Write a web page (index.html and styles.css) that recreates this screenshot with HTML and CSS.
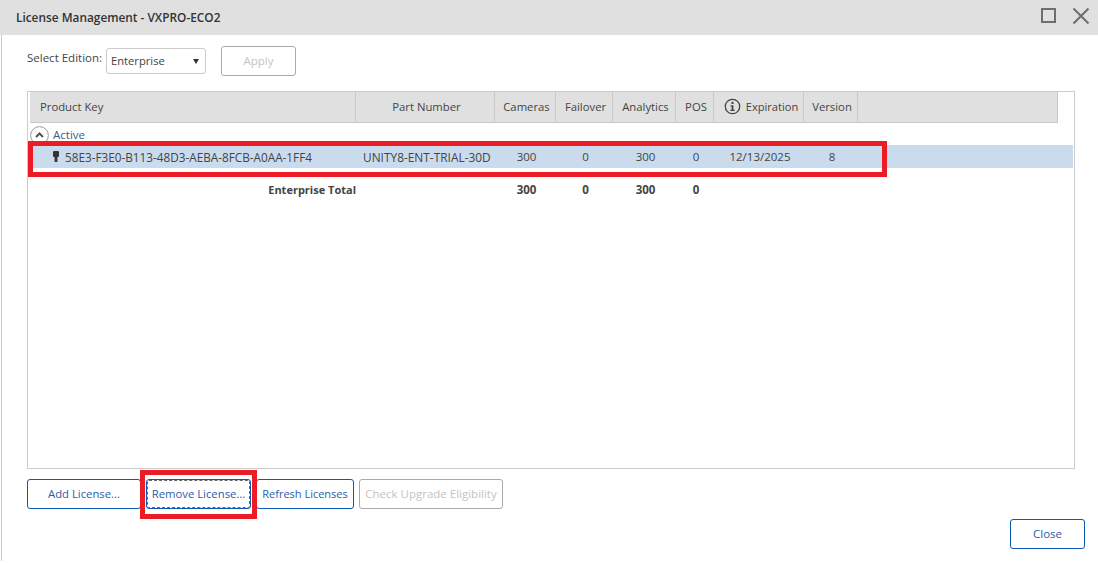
FILE: index.html
```html
<!DOCTYPE html>
<html lang="en">
<head>
    <meta charset="UTF-8">
    <title>License Management</title>
    <link rel="stylesheet" href="styles.css">
</head>
<body>
    <div class="window">
        <!-- Title Bar -->
        <div class="title-bar">
            <div class="title">License Management - VXPRO-ECO2</div>
            <div class="window-controls">
                <svg width="16" height="16" viewBox="0 0 16 16"><rect x="1" y="1" width="13" height="13" fill="none" stroke="#6e6e6e" stroke-width="2"/></svg>
                <svg width="18" height="18" viewBox="0 0 18 18"><path d="M1.5 1.5 L16.5 16.5 M16.5 1.5 L1.5 16.5" fill="none" stroke="#6e6e6e" stroke-width="2"/></svg>
            </div>
        </div>

        <!-- Edition Row -->
        <div class="edition-row">
            <span class="edition-label">Select Edition:</span>
            <div class="select-box">
                <span class="select-value">Enterprise</span>
                <span class="select-arrow"></span>
            </div>
            <button class="btn btn-disabled btn-apply">Apply</button>
        </div>

        <!-- License Grid -->
        <div class="grid-box">
            <div class="grid-header">
                <div class="head-cell head-left">Product Key</div>
                <div class="head-cell">Part Number</div>
                <div class="head-cell">Cameras</div>
                <div class="head-cell">Failover</div>
                <div class="head-cell">Analytics</div>
                <div class="head-cell">POS</div>
                <div class="head-cell head-info">
                    <svg width="17" height="17" viewBox="0 0 17 17">
                        <circle cx="8.5" cy="8.5" r="7.2" fill="none" stroke="#444" stroke-width="1.3"/>
                        <circle cx="8.5" cy="4.9" r="1.2" fill="#444"/>
                        <path d="M6.6 7.3 H9.4 V11.8 H10.6 V13 H6.4 V11.8 H7.6 V8.5 H6.6 Z" fill="#444"/>
                    </svg>
                    Expiration
                </div>
                <div class="head-cell">Version</div>
                <div class="head-fill"></div>
            </div>

            <div class="group-row">
                <svg width="19" height="19" viewBox="0 0 19 19">
                    <circle cx="9.5" cy="9.5" r="8.9" fill="#fff" stroke="#9a9a9a" stroke-width="1"/>
                    <path d="M6 11 L9.5 7.5 L13 11" fill="none" stroke="#555" stroke-width="2"/>
                </svg>
                <span class="group-name">Active</span>
            </div>

            <div class="data-row selected">
                <div class="cell key-cell">
                    <svg width="6" height="11" viewBox="0 0 6 11">
                        <path d="M1 0 H5 Q6 0 6 1 V5 Q6 6 4.4 6.3 V11 H1.6 V6.3 Q0 6 0 5 V1 Q0 0 1 0 Z" fill="#333"/>
                    </svg>
                    58E3-F3E0-B113-48D3-AEBA-8FCB-A0AA-1FF4
                </div>
                <div class="cell part-cell">UNITY8-ENT-TRIAL-30D</div>
                <div class="cell">300</div>
                <div class="cell">0</div>
                <div class="cell">300</div>
                <div class="cell">0</div>
                <div class="cell">12/13/2025</div>
                <div class="cell">8</div>
            </div>

            <div class="data-row total">
                <div class="cell total-label">Enterprise Total</div>
                <div class="cell"></div>
                <div class="cell">300</div>
                <div class="cell">0</div>
                <div class="cell">300</div>
                <div class="cell">0</div>
            </div>
        </div>

        <!-- Action Buttons -->
        <div class="action-row">
            <button class="btn btn-add">Add License...</button>
            <button class="btn btn-remove">Remove License...</button>
            <button class="btn btn-refresh">Refresh Licenses</button>
            <button class="btn btn-disabled btn-check">Check Upgrade Eligibility</button>
        </div>

        <div class="footer-row">
            <button class="btn btn-close">Close</button>
        </div>
    </div>

    <!-- Red annotation boxes drawn over the screenshot -->
    <div class="callout callout-row"></div>
    <div class="callout callout-button"></div>
</body>
</html>
```

FILE: styles.css
```css
/* General Styles */
* {
    box-sizing: border-box;
}

body {
    margin: 0;
    font-family: "Open Sans", "Noto Sans", sans-serif;
    font-size: 11.5px;
    color: #444;
    background: #fff;
}

.window {
    width: 1097px;
    height: 561px;
    margin-left: 1px;
    border-left: 1px solid #ccc;
}

/* Title Bar */
.title-bar {
    height: 35px;
    margin-left: -2px;
    background: #e0e0e0;
    display: flex;
    justify-content: space-between;
    align-items: center;
    padding: 0 8px 0 16px;
}

.title {
    font-weight: 600;
    font-size: 11.85px;
    color: #333;
    padding-bottom: 2px;
}

.window-controls {
    display: flex;
    align-items: center;
    gap: 15px;
    margin-bottom: 3px;
}

.window-controls svg {
    display: block;
}

/* Edition Row */
.edition-row {
    display: flex;
    align-items: flex-start;
    padding: 11px 0 0 25px;
    height: 56px;
}

.edition-label {
    margin-top: 4px;
    width: 79px;
}

.select-box {
    width: 100px;
    height: 26px;
    margin-top: 2px;
    border: 1px solid #ccc;
    border-radius: 3px;
    padding: 0 6px 2px 4px;
    display: flex;
    justify-content: space-between;
    align-items: center;
}

.select-value {
    font-size: 11.2px;
}

.select-arrow {
    width: 0;
    height: 0;
    margin-top: 2px;
    border-left: 3px solid transparent;
    border-right: 3px solid transparent;
    border-top: 5px solid #333;
}

/* Buttons */
.btn {
    font-family: inherit;
    font-size: 11.5px;
    height: 30px;
    padding: 0 0 2px;
    background: #fff;
    border: 1px solid #0a5ab5;
    border-radius: 3px;
    color: #2c5cab;
}

.btn-disabled {
    border-color: #aaa;
    color: #c4c4c4;
}

.btn-apply {
    width: 75px;
    margin-left: 15px;
}

.btn-add {
    width: 114px;
    font-size: 11.3px;
}

.btn-remove {
    width: 105px;
    font-size: 11.3px;
    outline: 1px dashed #666;
    outline-offset: -2px;
}

.btn-refresh {
    width: 98px;
    font-size: 11px;
}

.btn-check {
    width: 144px;
}

/* License Grid */
.grid-box {
    width: 1048px;
    height: 378px;
    margin-left: 25px;
    border: 1px solid #ccc;
    padding: 0 1px 0 2px;
}

.grid-header,
.data-row {
    display: grid;
    grid-template-columns: 326px 139px 61px 57px 63px 38px 90px 54px;
}

.grid-header {
    width: 1028px;
    height: 31px;
    font-size: 11.3px;
    background: #e0e0e0;
    border-bottom: 1px solid #c8c8c8;
    border-right: 1px solid #c8c8c8;
    grid-template-columns: 326px 139px 61px 57px 63px 38px 90px 54px 1fr;
}

.head-cell {
    display: flex;
    align-items: center;
    justify-content: center;
    border-right: 1px solid #c8c8c8;
    padding: 0 0 2px 3px;
    gap: 5px;
}

.head-left {
    justify-content: flex-start;
    padding-left: 10px;
}

.head-info {
    padding-left: 5px;
    font-size: 11.1px;
}

/* Rows */
.group-row {
    height: 22px;
    padding-top: 2px;
    display: flex;
    align-items: center;
    gap: 4px;
}

.group-name {
    color: #3b5a8a;
    margin-top: -2px;
}

.data-row {
    height: 23px;
    align-items: center;
}

.selected {
    background: #cbdbee;
}

.cell {
    text-align: center;
    padding-left: 2px;
}

.key-cell {
    display: flex;
    align-items: center;
    gap: 6px;
    padding-left: 23px;
    font-size: 11.75px;
    text-align: left;
}

.part-cell {
    text-align: left;
    padding-left: 7px;
    font-size: 11.9px;
    white-space: nowrap;
}

.total {
    margin-top: 10px;
    font-weight: 700;
}

.total-label {
    text-align: right;
    font-size: 11px;
    padding-left: 0;
}

/* Bottom Rows */
.action-row {
    display: flex;
    gap: 5px;
    margin: 10px 0 0 25px;
}

.footer-row {
    display: flex;
    justify-content: flex-end;
    padding-right: 13px;
    margin-top: 10px;
}

.btn-close {
    width: 75px;
}

/* Red Callouts */
.callout {
    position: absolute;
    border: 5px solid #ed1c24;
}

.callout-row {
    left: 28px;
    top: 141px;
    width: 859px;
    height: 36px;
}

.callout-button {
    left: 140px;
    top: 470px;
    width: 117px;
    height: 49px;
}
```
